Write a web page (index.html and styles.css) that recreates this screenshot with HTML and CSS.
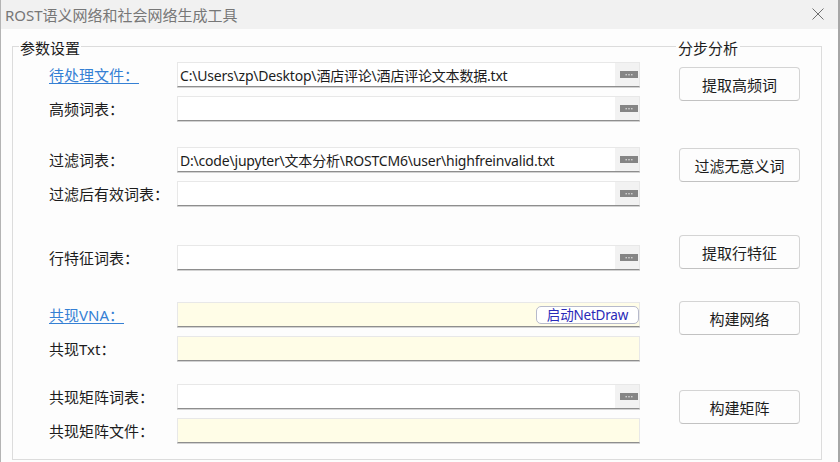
FILE: index.html
```html
<!DOCTYPE html>
<html lang="zh-CN">
<head>
    <meta charset="UTF-8">
    <meta name="viewport" content="width=device-width, initial-scale=1.0">
    <title>ROST语义网络和社会网络生成工具</title>
    <link rel="stylesheet" href="styles.css">
</head>
<body>
<div class="window">
    <div class="titlebar">
        <span class="title">ROST语义网络和社会网络生成工具</span>
        <svg class="close" width="12" height="12" viewBox="0 0 12 12">
            <path d="M0.5 0.5 L11.5 11.5 M11.5 0.5 L0.5 11.5" stroke="#6f6f6f" stroke-width="1"/>
        </svg>
    </div>

    <div class="group">
        <div class="params">
            <div class="legend">参数设置</div>

            <div class="section sec-1">
                <div class="row">
                    <a class="label link">待处理文件：</a>
                    <div class="field">C:\Users\zp\Desktop\酒店评论\酒店评论文本数据.txt
                        <span class="browse"><svg width="18" height="7" viewBox="0 0 18 7"><rect width="18" height="7" fill="#858585"/><rect x="5.5" y="3" width="1.4" height="1.4" fill="#d6d6d6"/><rect x="8.3" y="3" width="1.4" height="1.4" fill="#d6d6d6"/><rect x="11.1" y="3" width="1.4" height="1.4" fill="#d6d6d6"/></svg></span>
                    </div>
                </div>
                <div class="row">
                    <span class="label">高频词表：</span>
                    <div class="field">
                        <span class="browse"><svg width="18" height="7" viewBox="0 0 18 7"><rect width="18" height="7" fill="#858585"/><rect x="5.5" y="3" width="1.4" height="1.4" fill="#d6d6d6"/><rect x="8.3" y="3" width="1.4" height="1.4" fill="#d6d6d6"/><rect x="11.1" y="3" width="1.4" height="1.4" fill="#d6d6d6"/></svg></span>
                    </div>
                </div>
            </div>

            <div class="section sec-2">
                <div class="row">
                    <span class="label">过滤词表：</span>
                    <div class="field">D:\code\jupyter\文本分析\ROSTCM6\user\highfreinvalid.txt
                        <span class="browse"><svg width="18" height="7" viewBox="0 0 18 7"><rect width="18" height="7" fill="#858585"/><rect x="5.5" y="3" width="1.4" height="1.4" fill="#d6d6d6"/><rect x="8.3" y="3" width="1.4" height="1.4" fill="#d6d6d6"/><rect x="11.1" y="3" width="1.4" height="1.4" fill="#d6d6d6"/></svg></span>
                    </div>
                </div>
                <div class="row">
                    <span class="label">过滤后有效词表：</span>
                    <div class="field">
                        <span class="browse"><svg width="18" height="7" viewBox="0 0 18 7"><rect width="18" height="7" fill="#858585"/><rect x="5.5" y="3" width="1.4" height="1.4" fill="#d6d6d6"/><rect x="8.3" y="3" width="1.4" height="1.4" fill="#d6d6d6"/><rect x="11.1" y="3" width="1.4" height="1.4" fill="#d6d6d6"/></svg></span>
                    </div>
                </div>
            </div>

            <div class="section sec-3">
                <div class="row">
                    <span class="label">行特征词表：</span>
                    <div class="field">
                        <span class="browse"><svg width="18" height="7" viewBox="0 0 18 7"><rect width="18" height="7" fill="#858585"/><rect x="5.5" y="3" width="1.4" height="1.4" fill="#d6d6d6"/><rect x="8.3" y="3" width="1.4" height="1.4" fill="#d6d6d6"/><rect x="11.1" y="3" width="1.4" height="1.4" fill="#d6d6d6"/></svg></span>
                    </div>
                </div>
            </div>

            <div class="section sec-4">
                <div class="row">
                    <a class="label link">共现VNA：</a>
                    <div class="field note">
                        <span class="launch">启动NetDraw</span>
                    </div>
                </div>
                <div class="row">
                    <span class="label">共现Txt：</span>
                    <div class="field note"></div>
                </div>
            </div>

            <div class="section sec-5">
                <div class="row">
                    <span class="label">共现矩阵词表：</span>
                    <div class="field">
                        <span class="browse"><svg width="18" height="7" viewBox="0 0 18 7"><rect width="18" height="7" fill="#858585"/><rect x="5.5" y="3" width="1.4" height="1.4" fill="#d6d6d6"/><rect x="8.3" y="3" width="1.4" height="1.4" fill="#d6d6d6"/><rect x="11.1" y="3" width="1.4" height="1.4" fill="#d6d6d6"/></svg></span>
                    </div>
                </div>
                <div class="row">
                    <span class="label">共现矩阵文件：</span>
                    <div class="field note"></div>
                </div>
            </div>
        </div>

        <div class="steps">
            <div class="legend">分步分析</div>
            <button class="step step-freq">提取高频词</button>
            <button class="step step-filter">过滤无意义词</button>
            <button class="step step-line">提取行特征</button>
            <button class="step step-net">构建网络</button>
            <button class="step step-matrix">构建矩阵</button>
        </div>
    </div>
</div>
</body>
</html>
```

FILE: styles.css
```css
body {
    margin: 0;
    background: #fdfdfd;
    font-family: "Noto Sans", "Noto Sans CJK SC", sans-serif;
    color: #1c1c1c;
}
.window {
    width: 840px;
    height: 462px;
    box-sizing: border-box;
    border-left: 1px solid #b4b4b4;
    border-right: 2px solid #a6a6a6;
    overflow: hidden;
}
.titlebar {
    height: 29px;
    background: #f1f1f1;
    display: flex;
    align-items: center;
    justify-content: space-between;
    padding: 0 14px 0 4px;
}
.title {
    font-size: 15px;
    color: #777;
    line-height: 18px;
}
.close {
    display: block;
    margin-top: -2px;
}
.group {
    margin: 17px 0 0 11px;
    width: 808px;
    height: 412px;
    border: 1px solid #dcdcdc;
    display: flex;
}
.legend {
    width: fit-content;
    font-size: 15px;
    line-height: 18px;
    margin-top: -8px;
    padding: 0 1px;
    background: #fdfdfd;
}
.params {
    width: 627px;
}
.params .legend {
    margin-left: 6px;
}
.section {
    display: flex;
    flex-direction: column;
    gap: 9px;
    margin-left: 36px;
}
.sec-1 { margin-top: 5px; }
.sec-2 { margin-top: 26px; }
.sec-3 { margin-top: 39px; }
.sec-4 { margin-top: 32px; }
.sec-5 { margin-top: 23px; }
.row {
    display: flex;
    align-items: center;
    height: 25px;
}
.label {
    width: 128px;
    font-size: 15px;
    line-height: 20px;
}
.link {
    color: #3580d4;
    text-decoration: underline;
    text-underline-offset: 2px;
}
.field {
    width: 463px;
    height: 25px;
    box-sizing: border-box;
    border: 1px solid #e8e8e8;
    border-bottom: 1px solid #8e8e8e;
    box-shadow: 0 1px 0 #d2d2d2;
    background: #fff;
    display: flex;
    align-items: center;
    padding-left: 2px;
    font-size: 14px;
    letter-spacing: -0.2px;
    white-space: nowrap;
}
.field.note {
    background: #fffde7;
}
.browse {
    margin-left: auto;
    width: 23px;
    align-self: stretch;
    background: #f2f2f2;
    display: flex;
    align-items: center;
    justify-content: flex-end;
    padding-right: 1px;
}
.browse svg {
    display: block;
}
.launch {
    margin-left: auto;
    width: 103px;
    height: 18px;
    box-sizing: border-box;
    border: 1px solid #b7bacb;
    border-radius: 5px;
    background: #fff;
    color: #2a2ab8;
    font-size: 13.5px;
    line-height: 16px;
    letter-spacing: -0.2px;
    text-align: center;
}
.steps {
    flex: 1;
}
.steps .legend {
    margin-left: 36px;
    padding: 0 2px;
}
.step {
    display: block;
    margin-left: 39px;
    width: 121px;
    height: 34px;
    box-sizing: border-box;
    border: 1px solid #d4d4d4;
    border-bottom-color: #c2c2c2;
    border-radius: 4px;
    background: #fdfdfd;
    font-family: inherit;
    font-size: 15px;
    color: #1c1c1c;
    padding: 0;
}
.step-freq { margin-top: 10px; }
.step-filter { margin-top: 47px; }
.step-line { margin-top: 53px; }
.step-net { margin-top: 32px; }
.step-matrix { margin-top: 55px; }
```
